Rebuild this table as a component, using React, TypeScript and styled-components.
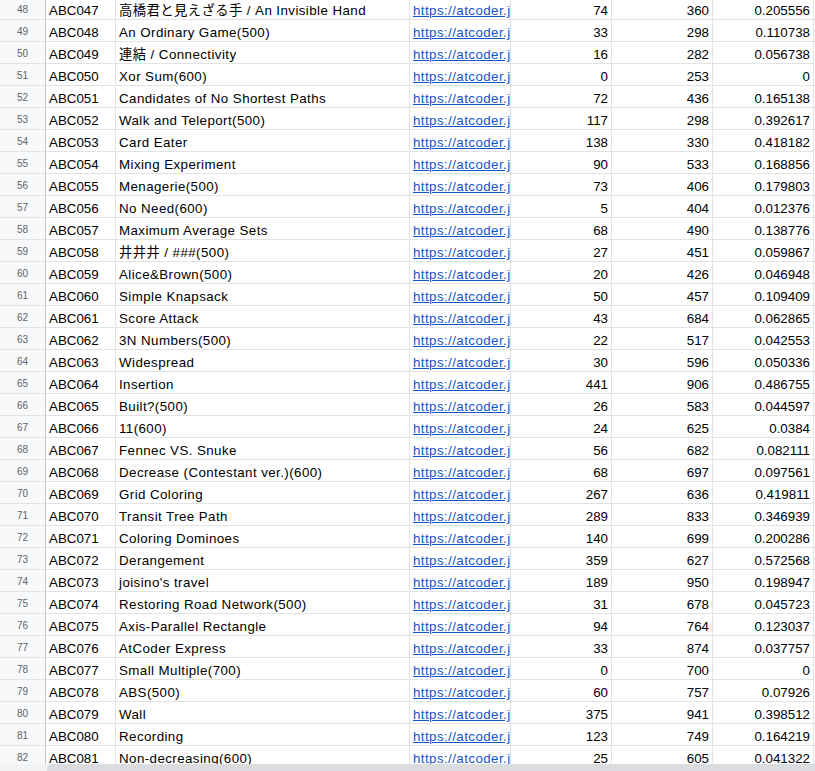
import React from "react";
import styled, { createGlobalStyle } from "styled-components";

const Global = createGlobalStyle`
  html, body { margin: 0; padding: 0; background: #fff; }
  body { overflow: hidden; }
`;

type Row = [string, string, number, number, string];

const rows: Row[] = [
  ["ABC047", "高橋君と見えざる手 / An Invisible Hand", 74, 360, "0.205556"],
  ["ABC048", "An Ordinary Game(500)", 33, 298, "0.110738"],
  ["ABC049", "連結 / Connectivity", 16, 282, "0.056738"],
  ["ABC050", "Xor Sum(600)", 0, 253, "0"],
  ["ABC051", "Candidates of No Shortest Paths", 72, 436, "0.165138"],
  ["ABC052", "Walk and Teleport(500)", 117, 298, "0.392617"],
  ["ABC053", "Card Eater", 138, 330, "0.418182"],
  ["ABC054", "Mixing Experiment", 90, 533, "0.168856"],
  ["ABC055", "Menagerie(500)", 73, 406, "0.179803"],
  ["ABC056", "No Need(600)", 5, 404, "0.012376"],
  ["ABC057", "Maximum Average Sets", 68, 490, "0.138776"],
  ["ABC058", "井井井 / ###(500)", 27, 451, "0.059867"],
  ["ABC059", "Alice&Brown(500)", 20, 426, "0.046948"],
  ["ABC060", "Simple Knapsack", 50, 457, "0.109409"],
  ["ABC061", "Score Attack", 43, 684, "0.062865"],
  ["ABC062", "3N Numbers(500)", 22, 517, "0.042553"],
  ["ABC063", "Widespread", 30, 596, "0.050336"],
  ["ABC064", "Insertion", 441, 906, "0.486755"],
  ["ABC065", "Built?(500)", 26, 583, "0.044597"],
  ["ABC066", "11(600)", 24, 625, "0.0384"],
  ["ABC067", "Fennec VS. Snuke", 56, 682, "0.082111"],
  ["ABC068", "Decrease (Contestant ver.)(600)", 68, 697, "0.097561"],
  ["ABC069", "Grid Coloring", 267, 636, "0.419811"],
  ["ABC070", "Transit Tree Path", 289, 833, "0.346939"],
  ["ABC071", "Coloring Dominoes", 140, 699, "0.200286"],
  ["ABC072", "Derangement", 359, 627, "0.572568"],
  ["ABC073", "joisino's travel", 189, 950, "0.198947"],
  ["ABC074", "Restoring Road Network(500)", 31, 678, "0.045723"],
  ["ABC075", "Axis-Parallel Rectangle", 94, 764, "0.123037"],
  ["ABC076", "AtCoder Express", 33, 874, "0.037757"],
  ["ABC077", "Small Multiple(700)", 0, 700, "0"],
  ["ABC078", "ABS(500)", 60, 757, "0.07926"],
  ["ABC079", "Wall", 375, 941, "0.398512"],
  ["ABC080", "Recording", 123, 749, "0.164219"],
  ["ABC081", "Non-decreasing(600)", 25, 605, "0.041322"],
];

const Page = styled.div`
  width: 815px;
  height: 771px;
  display: flex;
  flex-direction: column;
  overflow: hidden;
  font-family: "Liberation Sans", Arial, "Noto Sans CJK JP", sans-serif;
`;

const Viewport = styled.div`
  height: 764px;
  overflow: hidden;
  flex: none;
`;

const Grid = styled.div`
  margin-top: -2px;
  display: flex;
  flex-direction: column;
`;

const RowLine = styled.div`
  display: grid;
  grid-template-columns: 46px 70px 294px 101px 101px 101px 101px 40px;
  height: 22px;
`;

const HeaderCell = styled.div`
  background: #f8f9fa;
  border-right: 1px solid #c4c7c5;
  border-bottom: 1px solid #e2e3e3;
  color: #5f6368;
  font-size: 10px;
  display: flex;
  align-items: center;
  justify-content: center;
  padding-top: 1px;
`;

const Cell = styled.div<{ $align?: "left" | "right"; $wide?: boolean }>`
  border-right: 1px solid #e2e3e3;
  border-bottom: 1px solid #e2e3e3;
  font-size: 13.33px;
  line-height: 15px;
  letter-spacing: ${(p) => (p.$wide ? "0.42px" : "0")};
  color: #000;
  white-space: nowrap;
  overflow: hidden;
  display: flex;
  align-items: flex-end;
  justify-content: ${(p) => (p.$align === "right" ? "flex-end" : "flex-start")};
  padding: 0 ${(p) => (p.$align === "right" ? "3px" : "0")} 1px
    ${(p) => (p.$align === "right" ? "0" : "3px")};
`;

const LinkText = styled.span`
  color: #1155cc;
  text-decoration: underline;
`;

const Scrollbar = styled.div`
  height: 7px;
  flex: none;
  background: #f1f3f4;
  display: flex;
`;

const ScrollSpacer = styled.div`
  width: 47px;
  flex: none;
`;

const ScrollThumb = styled.div`
  flex: 1;
  background: #dadce0;
  border-top-left-radius: 4px;
`;

export default function App() {
  return (
    <Page>
      <Global />
      <Viewport>
        <Grid>
          {rows.map((r, i) => (
            <RowLine key={r[0]}>
              <HeaderCell>{48 + i}</HeaderCell>
              <Cell>{r[0]}</Cell>
              <Cell $wide>{r[1]}</Cell>
              <Cell $wide>
                <LinkText>https://atcoder.jp/contests/</LinkText>
              </Cell>
              <Cell $align="right">{r[2]}</Cell>
              <Cell $align="right">{r[3]}</Cell>
              <Cell $align="right">{r[4]}</Cell>
              <Cell />
            </RowLine>
          ))}
        </Grid>
      </Viewport>
      <Scrollbar>
        <ScrollSpacer />
        <ScrollThumb />
      </Scrollbar>
    </Page>
  );
}
